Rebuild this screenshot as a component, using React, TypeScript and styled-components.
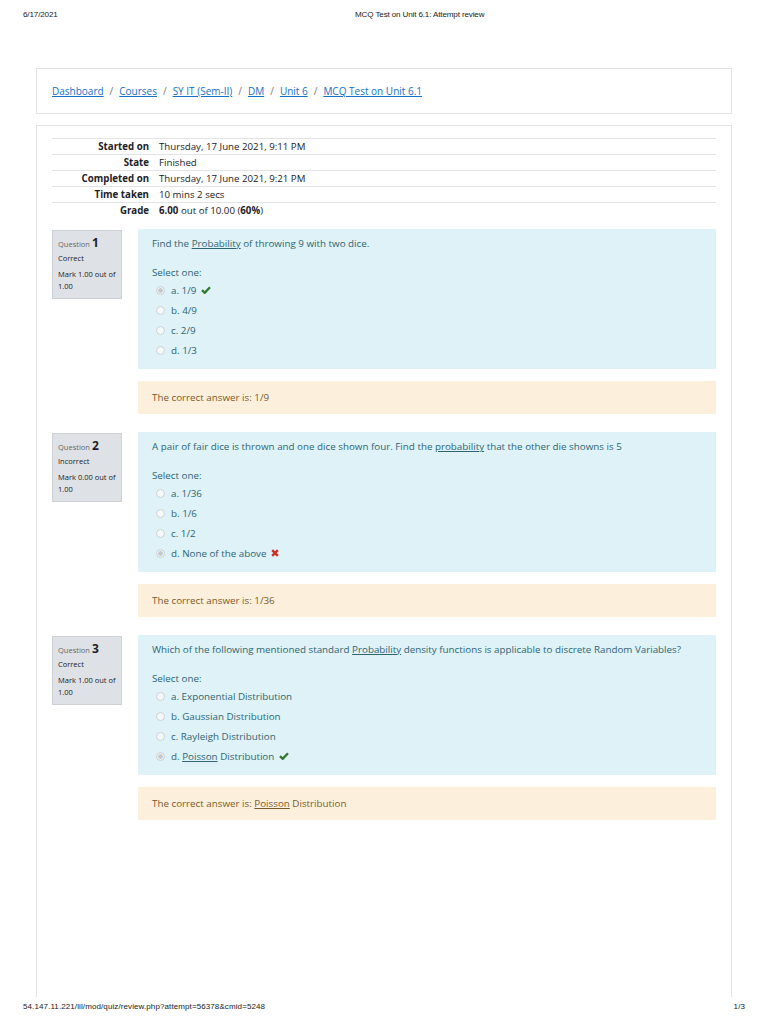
import React from 'react';
import styled, { createGlobalStyle } from 'styled-components';

const GlobalStyle = createGlobalStyle`
  html, body {
    margin: 0;
    padding: 0;
    background: #fff;
  }
  body {
    font-family: "Open Sans", Lato, sans-serif;
  }
`;

type Option = { label: string; text: React.ReactNode; chosen?: boolean; mark?: 'ok' | 'bad' };

type Question = {
  num: number;
  status: string;
  mark: string;
  text: React.ReactNode;
  options: Option[];
  answer: React.ReactNode;
};

const questions: Question[] = [
  {
    num: 1,
    status: 'Correct',
    mark: '1.00',
    text: <>Find the <Term>Probability</Term> of throwing 9 with two dice.</>,
    options: [
      { label: 'a.', text: '1/9', chosen: true, mark: 'ok' },
      { label: 'b.', text: '4/9' },
      { label: 'c.', text: '2/9' },
      { label: 'd.', text: '1/3' },
    ],
    answer: <>1/9</>,
  },
  {
    num: 2,
    status: 'Incorrect',
    mark: '0.00',
    text: <>A pair of fair dice is thrown and one dice shown four. Find the <Term>probability</Term> that the other die showns is 5</>,
    options: [
      { label: 'a.', text: '1/36' },
      { label: 'b.', text: '1/6' },
      { label: 'c.', text: '1/2' },
      { label: 'd.', text: 'None of the above', chosen: true, mark: 'bad' },
    ],
    answer: <>1/36</>,
  },
  {
    num: 3,
    status: 'Correct',
    mark: '1.00',
    text: <>Which of the following mentioned standard <Term>Probability</Term> density functions is applicable to discrete Random Variables?</>,
    options: [
      { label: 'a.', text: 'Exponential Distribution' },
      { label: 'b.', text: 'Gaussian Distribution' },
      { label: 'c.', text: 'Rayleigh Distribution' },
      { label: 'd.', text: <><Term>Poisson</Term> Distribution</>, chosen: true, mark: 'ok' },
    ],
    answer: <><Term>Poisson</Term> Distribution</>,
  },
];

const summary = [
  { label: 'Started on', value: <>Thursday, 17 June 2021, 9:11 PM</> },
  { label: 'State', value: <>Finished</> },
  { label: 'Completed on', value: <>Thursday, 17 June 2021, 9:21 PM</> },
  { label: 'Time taken', value: <>10 mins 2 secs</> },
  { label: 'Grade', value: <><b>6.00</b> out of 10.00 (<b>60%</b>)</> },
];

const crumbs = ['Dashboard', 'Courses', 'SY IT (Sem-II)', 'DM', 'Unit 6', 'MCQ Test on Unit 6.1'];

function Check() {
  return (
    <svg width="10" height="8" viewBox="0 0 10 8">
      <path d="M1 4.2 L3.7 6.8 L9 1.2" fill="none" stroke="#357a32" strokeWidth="2.4" />
    </svg>
  );
}

function Cross() {
  return (
    <svg width="8" height="8" viewBox="0 0 8 8">
      <path d="M1.2 1.2 L6.8 6.8 M6.8 1.2 L1.2 6.8" fill="none" stroke="#ca3120" strokeWidth="2.4" />
    </svg>
  );
}

export default function App() {
  return (
    <Page>
      <GlobalStyle />
      <PrintHeader>
        <span>6/17/2021</span>
        <span>MCQ Test on Unit 6.1: Attempt review</span>
      </PrintHeader>

      <Body>
        <Crumbs>
          {crumbs.map((c, i) => (
            <React.Fragment key={c}>
              <CrumbLink>{c}</CrumbLink>
              {i < crumbs.length - 1 && <Sep>/</Sep>}
            </React.Fragment>
          ))}
        </Crumbs>

        <MainCard>
          <Summary>
            {summary.map(r => (
              <SummaryRow key={r.label}>
                <SummaryLabel>{r.label}</SummaryLabel>
                <SummaryValue>{r.value}</SummaryValue>
              </SummaryRow>
            ))}
          </Summary>

          {questions.map(q => (
            <QuestionBlock key={q.num}>
              <Info>
                <InfoTitle>Question <QNum>{q.num}</QNum></InfoTitle>
                <InfoLine>{q.status}</InfoLine>
                <InfoLine>Mark {q.mark} out of<br />1.00</InfoLine>
              </Info>
              <QContent>
                <Formulation>
                  <QText>{q.text}</QText>
                  <Prompt>Select one:</Prompt>
                  <Options>
                    {q.options.map(o => (
                      <OptionRow key={o.label}>
                        <Radio $chosen={!!o.chosen} />
                        <span>{o.label} {o.text}</span>
                        {o.mark === 'ok' && <Check />}
                        {o.mark === 'bad' && <Cross />}
                      </OptionRow>
                    ))}
                  </Options>
                </Formulation>
                <Outcome>The correct answer is: {q.answer}</Outcome>
              </QContent>
            </QuestionBlock>
          ))}
        </MainCard>
      </Body>

      <PrintFooter>
        <span>54.147.11.221/lil/mod/quiz/review.php?attempt=56378&amp;cmid=5248</span>
        <span>1/3</span>
      </PrintFooter>
    </Page>
  );
}

function Term({ children }: { children: React.ReactNode }) {
  return <TermText>{children}</TermText>;
}

const Page = styled.div`
  width: 768px;
  height: 1024px;
  display: flex;
  flex-direction: column;
  overflow: hidden;
`;

const PrintHeader = styled.div`
  display: grid;
  grid-template-columns: 332px auto;
  padding: 10px 23px 0;
  height: 17px;
  font-family: "Liberation Sans", Arial, sans-serif;
  font-size: 8.1px;
  color: #222;
  letter-spacing: -0.15px;
`;

const Body = styled.div`
  flex: 1;
  display: flex;
  flex-direction: column;
  gap: 11px;
  padding: 41px 36px 0;
  min-height: 0;
`;

const Crumbs = styled.nav`
  height: 44px;
  border: 1px solid #e3e3e3;
  display: flex;
  align-items: center;
  padding: 0 15px;
  font-size: 10px;
`;

const CrumbLink = styled.a`
  color: #1670c4;
  text-decoration: underline;
`;

const Sep = styled.span`
  color: #777;
  margin: 0 6px;
`;

const MainCard = styled.main`
  flex: 1;
  border: 1px solid #e3e3e3;
  border-bottom: none;
  padding: 12px 15px 0;
  margin-bottom: 5px;
`;

const Summary = styled.div`
  display: flex;
  flex-direction: column;
  margin-bottom: 11px;
`;

const SummaryRow = styled.div`
  display: grid;
  grid-template-columns: 97px 1fr;
  column-gap: 10px;
  height: 15px;
  align-items: center;
  border-top: 1px solid #e3e3e3;
  font-size: 9.7px;
  color: #1d2125;
`;

const SummaryLabel = styled.span`
  text-align: right;
  font-weight: 700;
`;

const SummaryValue = styled.span`
  b { font-weight: 700; }
`;

const QuestionBlock = styled.section`
  display: grid;
  grid-template-columns: 70px 1fr;
  column-gap: 16px;
  align-items: start;
  margin-bottom: 18px;
`;

const Info = styled.div`
  background: #dee2e6;
  border: 1px solid #cdd1d5;
  padding: 3px 5px 6px;
  color: #1d2125;
  font-size: 7.5px;
  white-space: nowrap;
  display: flex;
  flex-direction: column;
  gap: 4px;
  margin-top: 1px;
`;

const InfoTitle = styled.div`
  color: #666;
  display: flex;
  align-items: baseline;
  gap: 2px;
  height: 14px;
`;

const QNum = styled.span`
  font-size: 12px;
  font-weight: 700;
  color: #1d2125;
`;

const InfoLine = styled.div`
  line-height: 12px;
`;

const QContent = styled.div`
  display: flex;
  flex-direction: column;
  gap: 12px;
`;

const Formulation = styled.div`
  background: #def2f8;
  color: #2f6473;
  padding: 8px 14px 9px;
  font-size: 9.8px;
`;

const QText = styled.div`
  line-height: 14px;
`;

const Prompt = styled.div`
  margin-top: 15px;
  line-height: 14px;
`;

const Options = styled.div`
  display: flex;
  flex-direction: column;
  padding-left: 4px;
`;

const OptionRow = styled.div`
  display: flex;
  align-items: center;
  gap: 5px;
  height: 20px;
`;

const Radio = styled.span<{ $chosen: boolean }>`
  width: 7px;
  height: 7px;
  border-radius: 50%;
  border: 1px solid #c9d3d7;
  background: ${p => (p.$chosen ? 'radial-gradient(circle, #c3c9cc 0 2px, #eef1f2 2.5px)' : '#f4f8f9')};
  margin-right: 1px;
`;

const Outcome = styled.div`
  background: #fcefdc;
  color: #7d5a29;
  font-size: 9.8px;
  height: 33px;
  display: flex;
  align-items: center;
  padding: 0 14px;
  white-space: pre;
`;

const TermText = styled.span`
  text-decoration: underline;
`;

const PrintFooter = styled.div`
  display: flex;
  justify-content: space-between;
  padding: 0 23px 13px;
  font-family: "Liberation Sans", Arial, sans-serif;
  font-size: 8px;
  color: #222;
  letter-spacing: 0.1px;
`;
